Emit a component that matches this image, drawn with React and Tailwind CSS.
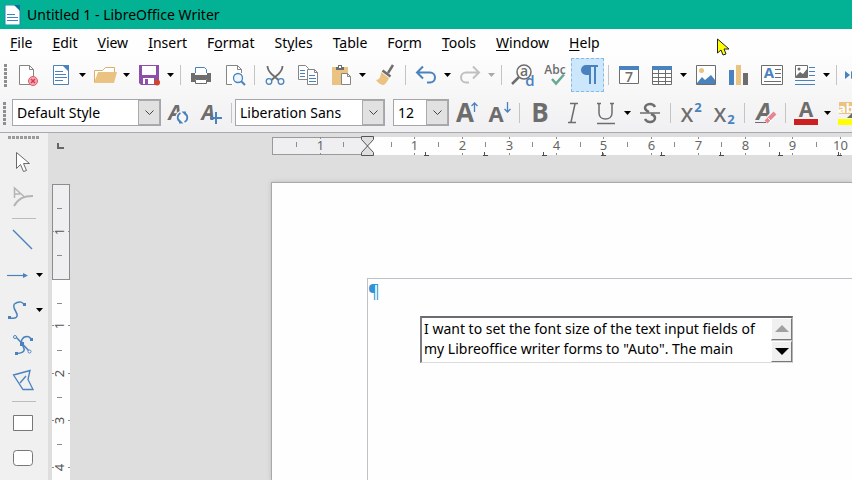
import React from 'react';

const GRAY = '#6d6d6d';
const BLUE = '#4a82bd';
const TAN = '#eac282';

const MENUS = [
  ['', 'F', 'ile'],
  ['', 'E', 'dit'],
  ['', 'V', 'iew'],
  ['', 'I', 'nsert'],
  ['F', 'o', 'rmat'],
  ['St', 'y', 'les'],
  ['T', 'a', 'ble'],
  ['Fo', 'r', 'm'],
  ['', 'T', 'ools'],
  ['', 'W', 'indow'],
  ['', 'H', 'elp'],
];

const Icon = ({ children }) => (
  <svg width="24" height="24" viewBox="0 0 24 24" fill="none" stroke={GRAY} className="shrink-0 overflow-visible" aria-hidden="true">
    {children}
  </svg>
);

const Glyph = ({ x, y, size, fill = GRAY, weight = 700, family = 'Open Sans', italic, children }) => (
  <text
    x={x}
    y={y}
    fontSize={size}
    fill={fill}
    stroke="none"
    fontWeight={weight}
    fontFamily={`"${family}", sans-serif`}
    fontStyle={italic ? 'italic' : 'normal'}
    textAnchor="middle"
  >
    {children}
  </text>
);

const Tool = ({ label, active, children }) => (
  <button
    type="button"
    aria-label={label}
    className={
      active
        ? 'flex h-[34px] w-[33px] shrink-0 items-center justify-center border border-dashed border-[#84b9e8] bg-[#cce6fb]'
        : 'flex h-[34px] w-[33px] shrink-0 items-center justify-center'
    }
  >
    <Icon>{children}</Icon>
  </button>
);

const CaretShape = ({ fill = '#000' }) => (
  <svg width="7" height="4" viewBox="0 0 7 4" aria-hidden="true">
    <path d="M0 0h7L3.5 4z" fill={fill} />
  </svg>
);

const Caret = ({ label, fill }) => (
  <button type="button" aria-label={label} className="flex h-[34px] w-[11px] shrink-0 items-center justify-center">
    <CaretShape fill={fill} />
  </button>
);

const Separator = () => (
  <div className="flex w-2 shrink-0 justify-center">
    <div className="h-5 w-px bg-[#c4c4c4]" />
  </div>
);

const Grip = () => (
  <svg width="3" height="24" viewBox="0 0 3 24" className="shrink-0" aria-hidden="true">
    {[0, 4, 8, 12, 16, 20].map(y => (
      <rect key={y} y={y + 1} width="3" height="3" fill="#8f8f8f" />
    ))}
  </svg>
);

const Combo = ({ label, value, width }) => (
  <div className={`${width} grid h-[27px] shrink-0 items-center border border-[#a5a5ab] bg-white`}>
    <select
      aria-label={label}
      defaultValue={value}
      className="col-start-1 row-start-1 h-full w-full appearance-none bg-transparent pl-1 outline-none"
    >
      <option>{value}</option>
    </select>
    <span className="pointer-events-none col-start-1 row-start-1 flex h-[25px] w-[22px] items-center justify-center justify-self-end border border-[#ababab] bg-[#e1e1e1]">
      <svg width="9" height="6" viewBox="0 0 9 6" fill="none" stroke="#444" aria-hidden="true">
        <path d="M.5 .5l4 4 4-4" />
      </svg>
    </span>
  </div>
);

const StandardToolbar = () => (
  <div className="flex h-[37px] items-center overflow-hidden pl-1">
    <Grip />
    <div className="w-1 shrink-0" />
    <Tool label="New">
      <path d="M3.5 2.5h10l4 4v15h-14z" fill="#fff" stroke="#858585" />
      <path d="M13.5 2.5v4h4" stroke="#858585" />
      <circle cx="17" cy="18" r="4.5" fill="#f3a9b0" stroke="#e0576a" />
      <path d="M15 16l4 4M19 16l-4 4" stroke="#d93b50" strokeWidth="1.5" />
    </Tool>
    <Tool label="Templates">
      <path d="M4.5 2.5h10l5 4v15h-15z" fill="#fff" stroke={BLUE} />
      <path d="M13 2h7v7z" fill={BLUE} stroke="none" />
      <path d="M6 8.5h8M6 11.5h11M6 14.5h12M6 17.5h8" stroke={BLUE} />
    </Tool>
    <Caret label="New options" />
    <Tool label="Open">
      <path d="M1.5 19.5v-12h8l3-3h9v5" fill="#fff" stroke="#dcae68" />
      <path d="M5 9h19l-3 11H1z" fill={TAN} stroke="none" />
    </Tool>
    <Caret label="Open recent" />
    <Tool label="Save">
      <path d="M2 2h20v20H4l-2-2z" fill="#8d4fa8" stroke="none" />
      <path d="M5 3h14v9H5zM6 15h11v6H6z" fill="#fff" stroke="none" />
      <path d="M8 16h3v5H8z" fill="#8d4fa8" stroke="none" />
      <circle cx="20" cy="19.5" r="3" fill="#d1442f" stroke="none" />
    </Tool>
    <Caret label="Save options" />
    <Separator />
    <Tool label="Print">
      <path d="M6.5 10V4.5h9l2 2V10" fill="#fff" stroke={BLUE} />
      <path d="M2 10h4v2h12v-2h4v9h-4v-3H6v3H2z" fill={GRAY} stroke="none" />
      <path d="M6.5 16.5h11v4h-11z" fill="#fff" />
    </Tool>
    <Tool label="Print preview">
      <path d="M10 21.5H4.500v-19h11l4 4V10" fill="#fff" stroke="#858585" />
      <path d="M15.5 2.5v4h4" stroke="#858585" />
      <circle cx="16" cy="15" r="4.5" fill="#eef5fb" stroke={BLUE} strokeWidth="1.3" />
      <path d="M19 18l4 4" stroke={BLUE} strokeWidth="2" />
    </Tool>
    <Separator />
    <Tool label="Cut">
      <path d="M4.5 3c0 4 2 6 4 8l7 6M19.5 3c0 4-2 6-4 8l-7 6" stroke={GRAY} strokeWidth="1.8" />
      <circle cx="6" cy="18.5" r="2.8" stroke={BLUE} strokeWidth="1.3" />
      <circle cx="18" cy="18.5" r="2.8" stroke={BLUE} strokeWidth="1.3" />
    </Tool>
    <Tool label="Copy">
      <path d="M2.5 2.5h7l3 3v11h-10z" fill="#fff" stroke="#858585" />
      <path d="M4 7.5h5M4 10.5h5M4 13.5h5" stroke={BLUE} />
      <path d="M11.5 6.5h7l3 3v12h-10z" fill="#fff" stroke="#858585" />
      <path d="M18.5 6.5v3h3" stroke="#858585" />
      <path d="M13 12.5h6M13 15.5h7M13 18.5h7" stroke={BLUE} />
    </Tool>
    <Tool label="Paste">
      <path d="M3 4h16v18H3z" fill={TAN} stroke="none" />
      <path d="M7 4h2V2h4v2h2v3H7z" fill={GRAY} stroke="none" />
      <path d="M10 3h2v2h-2z" fill="#fff" stroke="none" />
      <path d="M12.5 10.5h6l3 3v8h-9z" fill="#fff" stroke="#858585" />
      <path d="M18.5 10.5v3h3" stroke="#858585" />
    </Tool>
    <Caret label="Paste options" />
    <Tool label="Clone formatting">
      <path d="M20 2l-5 8" strokeWidth="2.5" />
      <path d="M9.5 7.5l8 6" strokeWidth="2.5" />
      <path d="M8 9l8 6c-1 3-3 5-5 7-3 0-6-2-8-5 3 0 5-3 5-8z" fill={TAN} stroke="none" />
    </Tool>
    <Separator />
    <Tool label="Undo">
      <path d="M9 3.500L3 9.500l6 6M3.500 9.500H16a5 5 0 010 10h-3" stroke={BLUE} strokeWidth="2" />
    </Tool>
    <Caret label="Undo steps" />
    <Tool label="Redo">
      <path d="M15 3.500l6 6-6 6M20.500 9.500H8a5 5 0 000 10h3" stroke="#c0c0c0" strokeWidth="2" />
    </Tool>
    <Caret label="Redo steps" fill="#a9a9a9" />
    <Separator />
    <Tool label="Find and replace">
      <circle cx="14" cy="9" r="7" strokeWidth="1.5" />
      <path d="M9 14l-7 7" strokeWidth="2.5" />
      <Glyph x={14} y={13} size={14} weight={600}>a</Glyph>
      <Glyph x={20} y={23} size={15} weight={600} fill={BLUE}>d</Glyph>
    </Tool>
    <Tool label="Spelling">
      <Glyph x={12} y={11} size={12} weight={600}>Abc</Glyph>
      <path d="M9 16l4 4.500 8-9" stroke="#66a892" strokeWidth="2.5" />
    </Tool>
    <Tool label="Formatting marks" active>
      <path d="M10 2h12v2h-2v17h-2V4h-3v17h-2v-9h-3a5 5 0 010-10z" fill={BLUE} stroke="none" />
    </Tool>
    <Separator />
    <Tool label="Insert field">
      <path d="M2.5 3.5h19v17h-19z" fill="#fff" />
      <path d="M2 3h20v4H2z" fill={BLUE} stroke="none" />
      <Glyph x={12} y={19} size={14} weight={600}>7</Glyph>
    </Tool>
    <Tool label="Insert table">
      <path d="M2.5 3.5h19v18h-19z" fill="#fff" />
      <path d="M2 3h20v4H2z" fill={BLUE} stroke="none" />
      <path d="M2 10.5h20M2 14.5h20M2 18.5h20M8.5 7v14M15.5 7v14" />
    </Tool>
    <Caret label="Table size" />
    <Tool label="Insert image">
      <path d="M2.5 2.5h19v19h-19z" fill="#fff" />
      <path d="M3 20l5-6 3 3 6-5 4 5v4H3z" fill={BLUE} stroke="none" />
      <circle cx="7.5" cy="7.5" r="2.5" fill={TAN} stroke="none" />
    </Tool>
    <Tool label="Insert chart">
      <path d="M2 7h5v15H2z" fill={BLUE} stroke="none" />
      <path d="M9 2h5v20H9z" fill={TAN} stroke="none" />
      <path d="M16 10h5v12h-5z" fill={GRAY} stroke="none" />
    </Tool>
    <Tool label="Insert text box">
      <path d="M1.5 2.5h21v19h-21z" fill="#fff" />
      <Glyph x={9} y={15} size={15} fill={BLUE}>A</Glyph>
      <path d="M15 6.5h6M15 10.5h6M15 14.5h6M4 18.5h17" />
    </Tool>
    <Tool label="Insert frame">
      <path d="M2.5 2.5h12v12h-12z" fill="#fff" />
      <path d="M3 13l4-4 3 2 4-5v8H3z" fill={GRAY} stroke="none" />
      <circle cx="6" cy="6" r="1.5" fill={GRAY} stroke="none" />
      <path d="M16 4.500h6M16 8.500h6M16 12.500h6M2 17.500h20M2 21.500h20" stroke={BLUE} />
    </Tool>
    <Caret label="Frame options" />
    <Separator />
    <button type="button" aria-label="More controls" className="flex h-[34px] shrink-0 items-center pl-[5px]">
      <svg width="12" height="8" viewBox="0 0 12 8" fill={BLUE} aria-hidden="true">
        <path d="M0 0l5 4-5 4zM6 0l5 4-5 4z" />
      </svg>
    </button>
  </div>
);

const FormattingToolbar = () => (
  <div className="flex h-[39px] items-center overflow-hidden pl-[3px]">
    <Grip />
    <div className="w-[6px] shrink-0" />
    <Combo label="Paragraph style" value="Default Style" width="w-[149px]" />
    <Tool label="Update style">
      <Glyph x={9} y={19} size={21} italic>A</Glyph>
      <circle cx="16.500" cy="16.500" r="7" fill="#f7f7f8" stroke="none" />
      <path d="M14.500 12a5 5 0 000 9M18.500 12a5 5 0 010 9" stroke={BLUE} strokeWidth="1.8" />
      <path d="M13 18v4.500h4.500zM20 10.500v4.500l-4.500-4.500z" fill={BLUE} stroke="none" />
    </Tool>
    <Tool label="New style">
      <Glyph x={9} y={19} size={21} italic>A</Glyph>
      <path d="M17 11v12M11 17h12" stroke={BLUE} strokeWidth="2" />
    </Tool>
    <Separator />
    <Combo label="Font name" value="Liberation Sans" width="w-[150px]" />
    <div className="w-2 shrink-0" />
    <Combo label="Font size" value="12" width="w-14" />
    <Tool label="Increase size">
      <Glyph x={11} y={21} size={26}>A</Glyph>
      <path d="M20.5 11V2M17.5 5l3-3 3 3" stroke={BLUE} strokeWidth="1.3" />
    </Tool>
    <Tool label="Decrease size">
      <Glyph x={9} y={21} size={22}>A</Glyph>
      <path d="M20.5 1v10M17.5 8l3 3 3-3" stroke={BLUE} strokeWidth="1.3" />
    </Tool>
    <Separator />
    <Tool label="Bold">
      <Glyph x={12} y={21} size={26}>B</Glyph>
    </Tool>
    <Tool label="Italic">
      <path d="M9 2.5h8M7 21.5h8M14 3l-4 18" strokeWidth="1.5" />
    </Tool>
    <Tool label="Underline">
      <path d="M3 2.5h4M16 2.5h4M5 2.5V12c0 4 3 6 6.500 6s6.500-2 6.500-6V2.500" strokeWidth="1.5" />
      <path d="M3 22.5h18" strokeWidth="1.5" />
    </Tool>
    <Caret label="Underline style" />
    <Tool label="Strikethrough">
      <path d="M17 6c-1-2-3-3-5-3-3 0-5 2-5 4 0 2 2 3 4 4M13 13c3 1 4 2 4 4 0 2-2 4-5 4-2 0-4-1-5-3" strokeWidth="2.5" />
      <path d="M2 12h20" strokeWidth="1.5" />
    </Tool>
    <Separator />
    <Tool label="Superscript">
      <Glyph x={8} y={21} size={20} weight={600}>X</Glyph>
      <Glyph x={19} y={11} size={13} fill={BLUE}>2</Glyph>
    </Tool>
    <Tool label="Subscript">
      <Glyph x={8} y={21} size={20} weight={600}>X</Glyph>
      <Glyph x={19} y={23} size={13} fill={BLUE}>2</Glyph>
    </Tool>
    <Separator />
    <Tool label="Clear formatting">
      <Glyph x={11} y={19} size={24} italic>A</Glyph>
      <path d="M2 21.5h11" />
      <path d="M13 21l9-9" stroke="#f7f7f8" strokeWidth="7" />
      <path d="M13 21l9-9" stroke="#e88592" strokeWidth="4" />
      <path d="M15 17l3 3" stroke="#fff" />
    </Tool>
    <Separator />
    <Tool label="Font color">
      <Glyph x={12} y={16} size={21}>A</Glyph>
      <path d="M0 18h24v6H0z" fill="#cc1f1f" stroke="none" />
    </Tool>
    <Caret label="Font color options" />
    <Tool label="Highlighting">
      <path d="M1 1h22v12H1z" fill={TAN} stroke="none" />
      <Glyph x={8} y={12} size={13} fill="#fff">ab</Glyph>
      <path d="M9 17l7-7 4 4-3 3z" fill={GRAY} stroke="none" />
      <path d="M0 18h24v6H0z" fill="#ffff00" stroke="none" />
    </Tool>
  </div>
);

const DrawTool = ({ label, caret, children }) => (
  <div className="flex h-[35px] shrink-0 items-center">
    <button
      type="button"
      aria-label={label}
      className={caret ? 'flex h-full w-[35px] items-center justify-center' : 'flex h-full w-[46px] items-center justify-center'}
    >
      <Icon>{children}</Icon>
    </button>
    {caret && (
      <button type="button" aria-label={`${label} options`} className="flex h-full w-[9px] items-center justify-center">
        <CaretShape />
      </button>
    )}
  </div>
);

const DrawSeparator = () => (
  <div className="flex h-2 shrink-0 items-center pl-3">
    <div className="h-px w-6 bg-[#bcbcbc]" />
  </div>
);

const DrawingToolbar = () => (
  <aside className="flex w-12 shrink-0 flex-col overflow-hidden bg-[#f0f0f0]">
    <svg width="32" height="3" viewBox="0 0 32 3" className="mx-2 mt-[3px] mb-[5px] shrink-0" aria-hidden="true">
      {[0, 4, 8, 12, 16, 20, 24, 28].map(x => (
        <rect key={x} x={x} width="3" height="3" fill="#9b9b9b" />
      ))}
    </svg>
    <DrawTool label="Select">
      <path d="M5.5 2.5v16l4-4 3 7 3-1-3-7h6z" fill="#fff" stroke="#6a6a6a" />
    </DrawTool>
    <DrawTool label="Edit points">
      <path d="M3 21c4-7 9-10 19-10" stroke="#b4b4b4" strokeWidth="2" />
      <path d="M3.5 13V3l10 9M4 9h5" stroke="#b4b4b4" strokeWidth="1.5" />
    </DrawTool>
    <DrawSeparator />
    <DrawTool label="Line">
      <path d="M2 2l19 19" stroke={BLUE} strokeWidth="1.5" />
    </DrawTool>
    <DrawTool label="Arrow" caret>
      <path d="M1 12.5h18" stroke={BLUE} strokeWidth="1.2" />
      <path d="M17 10l5 2.500-5 2.500z" fill={BLUE} stroke="none" />
    </DrawTool>
    <DrawTool label="Curve" caret>
      <path d="M4 20c6 1 9-1 6-6-3-5-3-8 0-9 4-2 7-1 8 2" stroke={BLUE} strokeWidth="1.5" />
      <path d="M2 18h3v3H2zM17 5h3v3h-3z" fill={BLUE} stroke="none" />
    </DrawTool>
    <DrawTool label="Polygon curve">
      <path d="M5 20.500c6 0 9-2 8-5s-4-6-2-9c2-4 8-4 9 0" stroke={BLUE} strokeWidth="1.5" />
      <path d="M5 4l13 14" stroke={BLUE} strokeWidth="1.5" />
      <path d="M4 19h3v3H4zM19 5h3v3h-3zM9 9h4v4H9z" fill={BLUE} stroke="none" />
      <circle cx="4" cy="4" r="1.5" fill="#fff" stroke={BLUE} />
      <circle cx="18.5" cy="18.5" r="1.5" fill="#fff" stroke={BLUE} />
    </DrawTool>
    <DrawTool label="Freeform">
      <path d="M2.5 7L19 2.500l-2 9 5 10H12zM9 15l6-7" stroke={BLUE} strokeWidth="1.3" />
    </DrawTool>
    <DrawSeparator />
    <DrawTool label="Rectangle">
      <path d="M2.5 4.500h19v15h-19z" fill="#fff" stroke="#777" />
    </DrawTool>
    <DrawTool label="Rounded rectangle">
      <rect x="2.5" y="4.5" width="19" height="15" rx="3" fill="#fff" stroke="#777" />
    </DrawTool>
  </aside>
);

// One ruler unit in px; the rulers are drawn from the margin edge outwards
const UNIT = 47.25;
const TAB = 59;
const unitAt = n => Math.round(n * UNIT) + 0.5;

const HorizontalRuler = () => (
  <svg className="h-full min-w-0 flex-1" aria-label="Horizontal ruler" shapeRendering="crispEdges">
    <rect x="1" y="4" width="100%" height="18" fill="#fefefe" />
    <rect x="1.5" y="4.5" width="95" height="17" fill="#efeff1" stroke="#9a9a9a" />
    {[-1, 1, 2, 3, 4, 5, 6, 7, 8, 9, 10].map(n => (
      <g key={n}>
        <path d={`M${96 + unitAt(n)} 4v2m0 14v2`} stroke="#8c8c8c" />
        <text x={96 + unitAt(n)} y="17" fontSize="13" fill="#666" textAnchor="middle">
          {Math.abs(n)}
        </text>
      </g>
    ))}
    {[-2, -1, 0, 1, 2, 3, 4, 5, 6, 7, 8, 9, 10].map(n => (
      <path key={n} d={`M${96 + unitAt(n + 0.5)} 9v5`} stroke="#8c8c8c" />
    ))}
    {[1, 2, 3, 4, 5, 6, 7, 8].map(n => (
      <path key={n} d={`M${95 + n * TAB + 0.5} 19v3m-2 .5h5`} stroke="#4d4d4d" />
    ))}
    <path
      d="M90.5 3.500h12v3l-6 6.500 6 6.500v3h-12v-3l6-6.500-6-6.500z"
      fill="#dfdfdf"
      stroke="#555"
      shapeRendering="auto"
    />
  </svg>
);

const VerticalRuler = () => (
  <svg className="mt-[2px] ml-1 h-full w-[18px] shrink-0" aria-label="Vertical ruler" shapeRendering="crispEdges">
    <rect width="18" height="100%" fill="#fefefe" />
    <rect x=".5" y=".5" width="17" height="95" fill="#efeff1" stroke="#8c8c8c" />
    {[-1, 1, 2, 3, 4].map(n => (
      <g key={n}>
        <path d={`M0 ${94 + unitAt(n)}h2m14 0h2`} stroke="#8c8c8c" />
        <text transform={`translate(12 ${94 + unitAt(n)}) rotate(-90)`} fontSize="13" fill="#555" textAnchor="middle">
          {Math.abs(n)}
        </text>
      </g>
    ))}
    {[-2, -1, 0, 1, 2, 3, 4].map(n => (
      <path key={n} d={`M5 ${95 + unitAt(n + 0.5)}h5`} stroke="#8c8c8c" />
    ))}
  </svg>
);

const ScrollButton = ({ label, up }) => (
  <button
    type="button"
    aria-label={label}
    className="flex flex-1 items-center justify-center border border-t-white border-r-[#777] border-b-[#777] border-l-white bg-[#f0f0f0]"
  >
    <svg width="14" height="7" viewBox="0 0 14 7" aria-hidden="true">
      {up ? <path d="M7 0l7 7H0z" fill="#a0a0a0" /> : <path d="M0 0h14L7 7z" fill="#000" />}
    </svg>
  </button>
);

const FormTextBox = () => (
  <div className="flex h-[47px] w-[373px] border-t-2 border-r border-b border-l-2 border-t-[#6c6c70] border-r-[#b5b5b5] border-b-[#dcdcdc] border-l-[#7c7c80] bg-white">
    <textarea
      aria-label="Form text"
      rows={2}
      spellCheck={false}
      defaultValue={'I want to set the font size of the text input fields of\nmy Libreoffice writer forms to "Auto". The main'}
      className="h-full min-w-0 flex-1 resize-none overflow-hidden bg-transparent pt-px pl-[2px] leading-5 whitespace-pre outline-none"
    />
    <div className="flex w-[21px] shrink-0 flex-col gap-px bg-[#c8c8c8]">
      <ScrollButton label="Scroll up" up />
      <ScrollButton label="Scroll down" />
    </div>
  </div>
);

const Workspace = () => (
  <main className="flex min-w-0 flex-1 flex-col bg-[#dedede]">
    <div className="flex h-[49px] shrink-0">
      <div className="w-[223px] shrink-0 pt-[10px] pl-[9px]">
        <div className="h-[6px] w-[7px] border-b-2 border-l-2 border-[#666]" />
      </div>
      <HorizontalRuler />
    </div>
    <div className="flex min-h-0 flex-1">
      <div className="flex w-[223px] shrink-0">
        <VerticalRuler />
      </div>
      <div className="min-w-0 flex-1 border-t border-l border-[#a9a9a9] bg-[#fefefe] pt-[95px] pl-[95px] shadow-[0_0_4px_#bbb]">
        <div className="h-full border-t border-l border-[#c0c0c8]">
          <div className="h-[37px] text-lg leading-6 text-[#2f93d8]">¶</div>
          <div className="pl-[52px]">
            <FormTextBox />
          </div>
        </div>
      </div>
    </div>
  </main>
);

const App = () => (
  <div className="relative flex h-screen flex-col overflow-hidden bg-[#f4f4f5] font-['Noto_Sans','Open_Sans',sans-serif] text-sm text-black">
    <header className="flex h-[29px] shrink-0 items-center gap-[6px] bg-[#03b294] pl-1">
      <svg width="17" height="20" viewBox="0 0 17 20" aria-hidden="true">
        <path d="M1 0h10l5 5v15H1z" fill="#fff" stroke="#2d7fb8" />
        <path d="M10 0h6v6z" fill="#0d6f9e" />
        <path d="M3 9.500h8M3 12.500h11M3 15.500h11" stroke="#3a86c4" />
      </svg>
      <h1>Untitled 1 - LibreOffice Writer</h1>
    </header>
    <nav className="flex h-[27px] shrink-0 items-center bg-[#fefefe]">
      {MENUS.map(([before, key, after]) => (
        <button key={before + key + after} type="button" className="px-[10px]">
          {before}
          <span className="underline underline-offset-2">{key}</span>
          {after}
        </button>
      ))}
    </nav>
    <div className="shrink-0 border-b border-[#a9a9ab] bg-linear-to-b from-[#fdfdfd] to-[#f0f0f2]">
      <StandardToolbar />
      <FormattingToolbar />
    </div>
    <div className="flex min-h-0 flex-1">
      <DrawingToolbar />
      <Workspace />
    </div>
    <svg width="13" height="19" viewBox="0 0 13 19" className="pointer-events-none absolute top-[38px] left-[717px]" aria-hidden="true">
      <path d="M.5 1v14l3.500-3 2 5 3-1-2-5h5z" fill="#ff0" stroke="#222" />
    </svg>
  </div>
);

export default App;
